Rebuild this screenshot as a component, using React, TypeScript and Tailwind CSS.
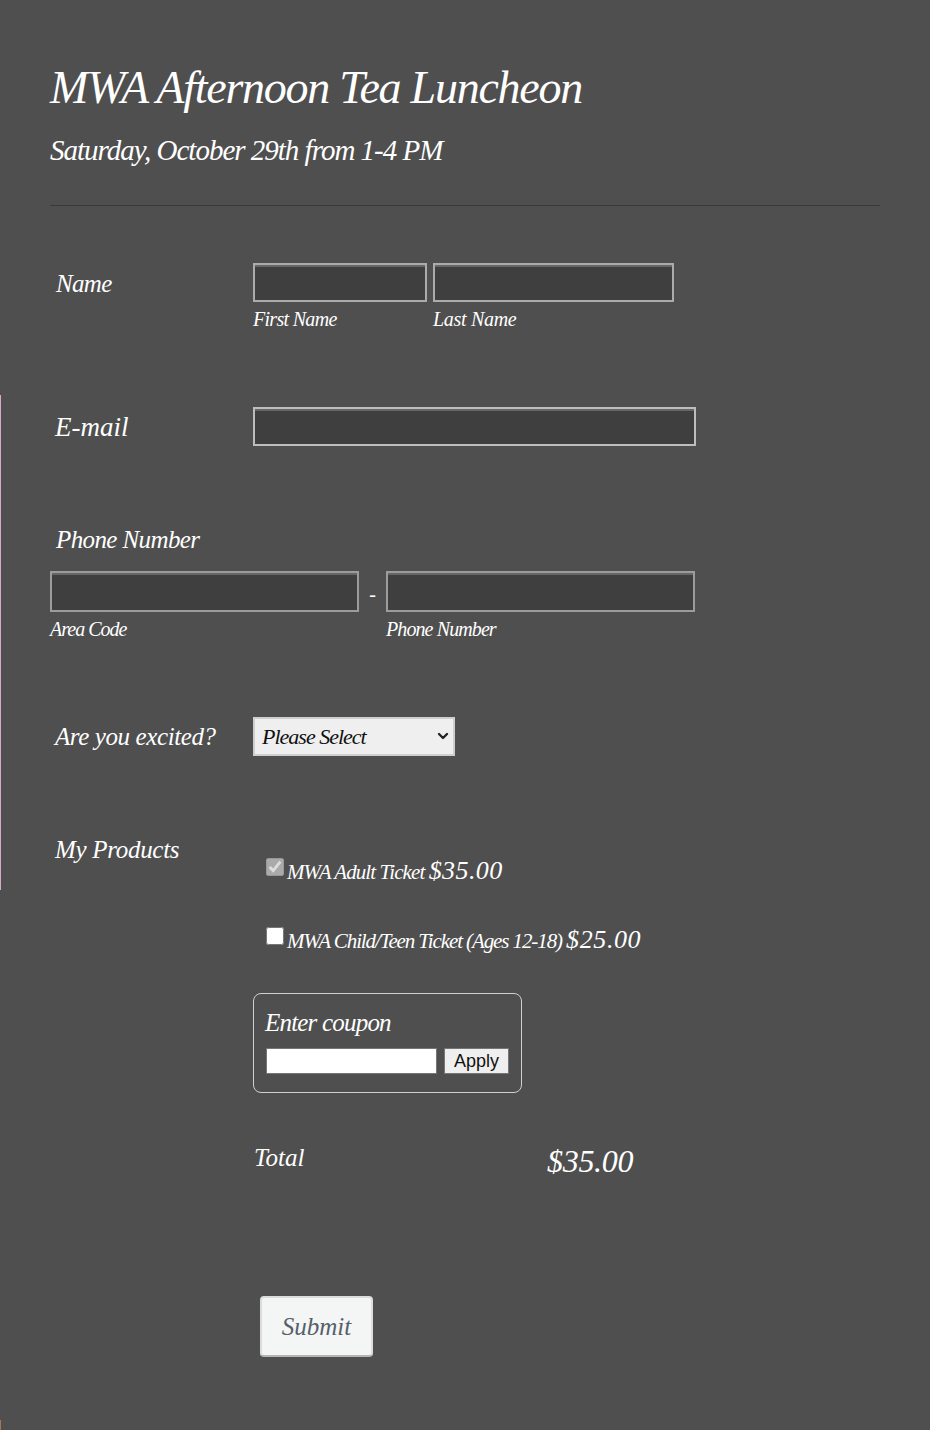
import React from 'react';
import { ChevronDown } from 'lucide-react';

const script = "font-['Liberation_Serif',serif] italic";
const inputCls =
  'bg-[#3f3f3f] border-2 shadow-[inset_0_2px_0_#666666] outline-none block';

const App = () => {
  return (
    <div className={`relative w-[930px] h-[1430px] overflow-hidden bg-[#4f4f4f] text-white px-[50px] ${script}`}>
      {/* left edge strip */}
      <div className="absolute left-0 top-[395px] h-[495px] w-px bg-[#d9a9c9]"></div>
      <div className="absolute left-0 bottom-0 h-[10px] w-px bg-[#a5765a]"></div>

      {/* header */}
      <div className="pt-[60px] border-b border-[#3a3a3a] h-[206px]">
        <h1 className="text-[46px] leading-[56px] tracking-[-1.25px]">MWA Afternoon Tea Luncheon</h1>
        <p className="mt-[14px] text-[29px] leading-[40px] tracking-[-1px]">Saturday, October 29th from 1-4 PM</p>
      </div>

      {/* name */}
      <div className="flex mt-[57px] h-[70px]">
        <label className="w-[203px] pl-[6px] pt-[4px] text-[25px] leading-[34px] tracking-[-0.7px]">Name</label>
        <div className="flex gap-[6px]">
          <div className="w-[174px]">
            <input className={`${inputCls} w-full h-[39px] border-[#ababab]`} />
            <p className="mt-[4px] text-[20px] leading-[26px] tracking-[-0.7px]">First Name</p>
          </div>
          <div className="w-[241px]">
            <input className={`${inputCls} w-full h-[39px] border-[#ababab]`} />
            <p className="mt-[4px] text-[20px] leading-[26px] tracking-[-0.3px]">Last Name</p>
          </div>
        </div>
      </div>

      {/* email */}
      <div className="flex mt-[74px] h-[39px]">
        <label className="w-[203px] pl-[5px] pt-[3px] text-[27px] leading-[34px]">E-mail</label>
        <input className={`${inputCls} w-[443px] h-[39px] border-[#bdbdbd]`} />
      </div>

      {/* phone */}
      <label className="block mt-[77px] pl-[6px] text-[25px] leading-[34px] tracking-[-0.6px]">Phone Number</label>
      <div className="flex mt-[14px]">
        <div className="w-[309px]">
          <input className={`${inputCls} w-full h-[41px] border-[#9c9c9c]`} />
          <p className="mt-[4px] text-[20px] leading-[26px] tracking-[-1px]">Area Code</p>
        </div>
        <div className="w-[27px] text-center text-[20px] leading-[46px]">-</div>
        <div className="w-[309px]">
          <input className={`${inputCls} w-full h-[41px] border-[#9c9c9c]`} />
          <p className="mt-[4px] text-[20px] leading-[26px] tracking-[-0.9px]">Phone Number</p>
        </div>
      </div>

      {/* excited */}
      <div className="flex mt-[75px] h-[39px]">
        <label className="w-[203px] pl-[5px] pt-[3px] text-[25px] leading-[34px] tracking-[-0.4px]">Are you excited?</label>
        <div className="relative w-[202px] h-[39px]">
          <select className="appearance-none w-full h-full pl-[7px] bg-[#efefef] border-2 border-[#cfcfcf] text-[#111] text-[22px] italic tracking-[-1px]">
            <option>Please Select</option>
          </select>
          <ChevronDown className="absolute right-[4px] top-[11px] w-[16px] h-[16px] text-[#222] pointer-events-none" strokeWidth={3.5} />
        </div>
      </div>

      {/* products */}
      <div className="flex mt-[77px]">
        <label className="w-[203px] pl-[5px] text-[25px] leading-[34px] tracking-[-0.3px]">My Products</label>
        <div className="w-[500px]">
          <div className="flex items-start pl-[13px] pt-[25px] h-[87px]">
            <input type="checkbox" checked disabled readOnly className="w-[18px] h-[18px] m-0" />
            <span className="ml-[3px] text-[21px] leading-[26px] tracking-[-0.9px]">
              MWA Adult Ticket <span className="text-[26px] tracking-[0.4px]">$35.00</span>
            </span>
          </div>
          <div className="flex items-start pl-[13px] pt-[7px] h-[73px]">
            <input type="checkbox" className="w-[18px] h-[18px] m-0" />
            <span className="ml-[3px] text-[21px] leading-[26px] tracking-[-1.1px]">
              MWA Child/Teen Ticket (Ages 12-18) <span className="text-[26px] tracking-[0.6px]">$25.00</span>
            </span>
          </div>

          {/* coupon */}
          <div className="w-[269px] h-[100px] border border-[#d0d0d0] rounded-lg pl-[11px] pr-[12px] pt-[12px]">
            <p className="text-[25px] leading-[34px] tracking-[-0.8px]">Enter coupon</p>
            <div className="flex gap-[7px] mt-[8px] ml-[1px] not-italic">
              <input className="w-[171px] h-[26px] bg-white border border-[#767676]" />
              <button className="w-[66px] h-[26px] bg-[#efefef] border border-[#767676] text-[#111] text-[18px] leading-[22px] font-['Liberation_Sans',sans-serif]">
                Apply
              </button>
            </div>
          </div>

          {/* total */}
          <div className="flex mt-[48px] h-[40px]">
            <span className="w-[294px] pl-[1px] text-[25px] leading-[34px]">Total</span>
            <span className="text-[32px] leading-[40px] tracking-[-0.3px]">$35.00</span>
          </div>

          {/* submit */}
          <button className="block mt-[115px] ml-[7px] w-[113px] h-[61px] rounded-[4px] bg-[#f4f5f5] border-2 border-[#dcdcdc] border-b-[#b5b5b5] text-[#55606a] text-[25px] italic">
            Submit
          </button>
        </div>
      </div>
    </div>
  );
};

export default App;
